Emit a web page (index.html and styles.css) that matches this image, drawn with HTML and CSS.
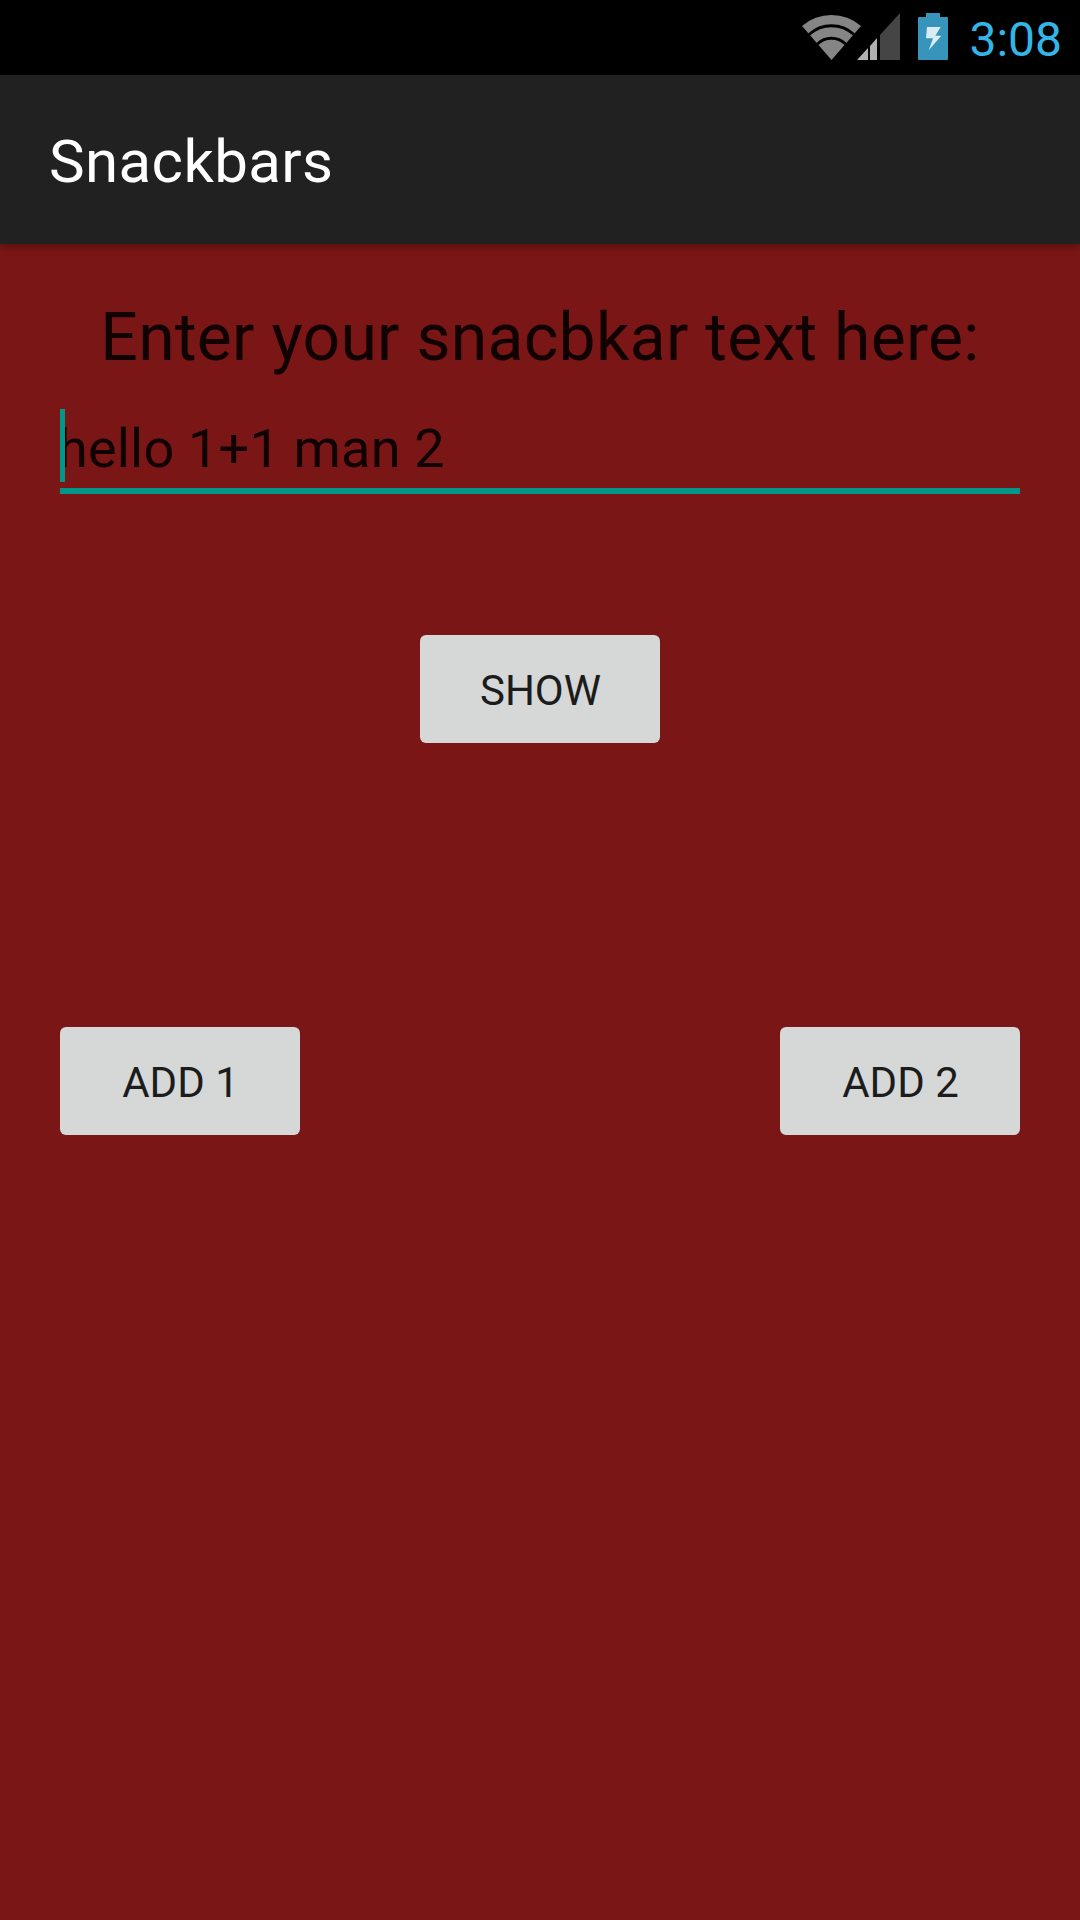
FILE: index.html
```html
<!DOCTYPE html>
<html lang="en">
<head>
    <meta charset="UTF-8">
    <meta name="viewport" content="width=device-width, initial-scale=1.0">
    <title>Snackbars</title>
    <link rel="stylesheet" href="styles.css">
</head>
<body>
    <div class="status-bar">
        <!-- Wifi -->
        <svg class="icon-wifi" viewBox="0 0 59 46">
            <path d="M29.5 46 L0 12 A45 45 0 0 1 59 12 Z" fill="#858585"/>
            <path d="M7 20.5 A33 33 0 0 1 52 20.5" fill="none" stroke="#000" stroke-width="3"/>
            <path d="M15.5 30 A20 20 0 0 1 43.5 30" fill="none" stroke="#000" stroke-width="3"/>
        </svg>
        <!-- Signal -->
        <svg class="icon-signal" viewBox="0 0 43 47">
            <polygon points="0,47 11,35 11,47" fill="#b0b0b0"/>
            <polygon points="13,33 20,25 20,47 13,47" fill="#b0b0b0"/>
            <polygon points="23,22 43,0 43,47 23,47" fill="#454545"/>
        </svg>
        <!-- Battery -->
        <svg class="icon-battery" viewBox="0 0 30 47">
            <rect x="8" y="0" width="14" height="5" fill="#3795bc"/>
            <rect x="0" y="4" width="30" height="43" rx="1" fill="#3795bc"/>
            <polygon points="9,14 22.7,14 17.3,22.7 23.3,22.7 10.7,37.3 15,25.3 8,25.3" fill="#d9edf5"/>
        </svg>
        <span class="clock">3:08</span>
    </div>

    <div class="app-bar">Snackbars</div>

    <div class="content">
        <div class="prompt">Enter your snacbkar text here:</div>
        <div class="text-field">hello 1+1 man 2</div>

        <div class="show-row">
            <button type="button" class="btn">SHOW</button>
        </div>

        <div class="add-row">
            <button type="button" class="btn">ADD 1</button>
            <button type="button" class="btn">ADD 2</button>
        </div>
    </div>
</body>
</html>
```

FILE: styles.css
```css
:root {
    --teal: #009688;
    --page: #7a1616;
    --ink: #100202;
}

html, body {
    margin: 0;
    padding: 0;
}

body {
    width: 1080px;
    height: 1920px;
    overflow: hidden;
    display: flex;
    flex-direction: column;
    background: var(--page);
    font-family: Roboto, "Liberation Sans", sans-serif;
}

.status-bar {
    height: 75px;
    flex: none;
    display: flex;
    justify-content: flex-end;
    align-items: flex-start;
    padding-right: 18px;
    box-sizing: border-box;
    background: #000;
}

.icon-wifi {
    width: 59px;
    height: 46px;
    margin-top: 14px;
}

.icon-signal {
    width: 43px;
    height: 47px;
    margin: 13px 0 0 -4px;
}

.icon-battery {
    width: 30px;
    height: 47px;
    margin: 13px 0 0 18px;
}

.clock {
    margin-left: 21px;
    font-size: 48px;
    line-height: 80px;
    color: #33b5e5;
}

.app-bar {
    height: 169px;
    flex: none;
    padding-left: 49px;
    line-height: 174px;
    font-size: 60px;
    letter-spacing: 0.4px;
    color: #fff;
    background: #212121;
    box-shadow: 0 2px 8px rgba(0,0,0,0.35);
    position: relative;
}

.content {
    flex: 1;
    padding: 0 60px;
}

.prompt {
    margin-top: 52px;
    font-size: 66px;
    letter-spacing: 0.3px;
    line-height: 84px;
    text-align: center;
    color: var(--ink);
}

.text-field {
    margin-top: 29px;
    height: 79px;
    line-height: 80px;
    font-size: 54px;
    letter-spacing: 0.2px;
    text-indent: -2px;
    color: var(--ink);
    border-bottom: 6px solid var(--teal);
    position: relative;
}

/* text cursor */
.text-field::before {
    content: "";
    position: absolute;
    left: 0;
    top: 0;
    width: 5px;
    height: 73px;
    background: var(--teal);
}

.show-row {
    display: flex;
    justify-content: center;
    margin-top: 141px;
}

.add-row {
    display: flex;
    justify-content: space-between;
    margin-top: 284px;
}

.btn {
    width: 240px;
    height: 108px;
    padding: 2px 0 0 1px;
    border: none;
    border-radius: 6px;
    background: #d6d8d7;
    color: #1c1c1c;
    font-family: inherit;
    font-size: 42px;
}
```
